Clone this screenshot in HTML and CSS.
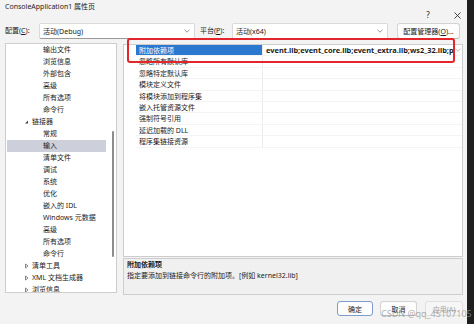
FILE: index.html
```html
<!DOCTYPE html>
<html lang="zh-CN">
<head>
    <meta charset="UTF-8">
    <title>ConsoleApplication1 属性页</title>
    <link rel="stylesheet" href="styles.css">
</head>
<body>
    <div class="dialog">
        <!-- title bar -->
        <div class="titlebar">
            <span class="title">ConsoleApplication1 属性页</span>
            <span class="tb-btn">?</span>
            <span class="tb-btn close">
                <svg width="7" height="7" viewBox="0 0 7 7"><path d="M0.5 0.5L6.5 6.5M6.5 0.5L0.5 6.5" stroke="#333" stroke-width="0.9"/></svg>
            </span>
        </div>

        <!-- configuration row -->
        <div class="toolbar">
            <span class="lbl">配置(<u>C</u>):</span>
            <div class="combo">
                <span>活动(Debug)</span>
                <svg class="chev" width="6" height="4" viewBox="0 0 6 4"><path d="M0.5 0.8L3 3.2L5.5 0.8" fill="none" stroke="#777" stroke-width="0.8"/></svg>
            </div>
            <span class="lbl plat">平台(<u>P</u>):</span>
            <div class="combo">
                <span>活动(x64)</span>
                <svg class="chev" width="6" height="4" viewBox="0 0 6 4"><path d="M0.5 0.8L3 3.2L5.5 0.8" fill="none" stroke="#777" stroke-width="0.8"/></svg>
            </div>
            <button class="btn mgr">配置管理器(<u>O</u>)...</button>
        </div>

        <div class="main">
            <!-- category tree -->
            <div class="tree">
                <div class="node l2">输出文件</div>
                <div class="node l2">浏览信息</div>
                <div class="node l2">外部包含</div>
                <div class="node l2">高级</div>
                <div class="node l2">所有选项</div>
                <div class="node l2">命令行</div>
                <div class="node l1">
                    <svg class="arrow" width="8" height="6" viewBox="0 0 8 6"><path d="M4 1.5L4 4.5L1 4.5Z" fill="#444"/></svg>链接器
                </div>
                <div class="node l2">常规</div>
                <div class="node l2 sel">输入</div>
                <div class="node l2">清单文件</div>
                <div class="node l2">调试</div>
                <div class="node l2">系统</div>
                <div class="node l2">优化</div>
                <div class="node l2">嵌入的 IDL</div>
                <div class="node l2">Windows 元数据</div>
                <div class="node l2">高级</div>
                <div class="node l2">所有选项</div>
                <div class="node l2">命令行</div>
                <div class="node l1">
                    <svg class="arrow" width="8" height="6" viewBox="0 0 8 6"><path d="M1.5 1L4 3L1.5 5Z" fill="none" stroke="#555" stroke-width="0.7"/></svg>清单工具
                </div>
                <div class="node l1">
                    <svg class="arrow" width="8" height="6" viewBox="0 0 8 6"><path d="M1.5 1L4 3L1.5 5Z" fill="none" stroke="#555" stroke-width="0.7"/></svg>XML 文档生成器
                </div>
                <div class="node l1">
                    <svg class="arrow" width="8" height="6" viewBox="0 0 8 6"><path d="M1.5 1L4 3L1.5 5Z" fill="none" stroke="#555" stroke-width="0.7"/></svg>浏览信息
                </div>
                <div class="scroll-thumb"></div>
            </div>

            <div class="props">
                <!-- property grid -->
                <div class="grid">
                    <div class="row">
                        <div class="name sel">附加依赖项</div>
                        <div class="value bold">
                            <span class="val-text">event.lib;event_core.lib;event_extra.lib;ws2_32.lib;p</span>
                            <svg class="chev" width="6" height="4" viewBox="0 0 6 4"><path d="M0.5 0.8L3 3.2L5.5 0.8" fill="none" stroke="#aaa" stroke-width="0.8"/></svg>
                        </div>
                    </div>
                    <div class="row"><div class="name">忽略所有默认库</div><div class="value"></div></div>
                    <div class="row"><div class="name">忽略特定默认库</div><div class="value"></div></div>
                    <div class="row"><div class="name">模块定义文件</div><div class="value"></div></div>
                    <div class="row"><div class="name">将模块添加到程序集</div><div class="value"></div></div>
                    <div class="row"><div class="name">嵌入托管资源文件</div><div class="value"></div></div>
                    <div class="row"><div class="name">强制符号引用</div><div class="value"></div></div>
                    <div class="row"><div class="name">延迟加载的 DLL</div><div class="value"></div></div>
                    <div class="row"><div class="name">程序集链接资源</div><div class="value"></div></div>
                </div>

                <!-- description -->
                <div class="desc">
                    <div class="desc-title">附加依赖项</div>
                    <div>指定要添加到链接命令行的附加项。[例如 kernel32.lib]</div>
                </div>
            </div>
        </div>

        <div class="footer">
            <button class="btn ok">确定</button>
            <button class="btn cancel">取消</button>
            <button class="btn apply" disabled>应用(A)</button>
        </div>

        <!-- red highlight drawn over the screenshot -->
        <div class="annot"></div>
        <div class="watermark">CSDN @qq_45107105</div>
    </div>
</body>
</html>
```

FILE: styles.css
```css
* {
    box-sizing: border-box;
}
body {
    margin: 0;
    width: 474px;
    height: 324px;
    background: #1f1f1f;
    font-family: "Noto Sans", "Noto Sans CJK SC", sans-serif;
    font-size: 7px;
    color: #1b1b1b;
    overflow: hidden;
}
.dialog {
    position: relative;
    width: 467px;
    height: 324px;
    background: #f3f3f3;
    display: flex;
    flex-direction: column;
}

/* title bar */
.titlebar {
    display: flex;
    height: 22px;
}
.title {
    flex: 1;
    padding: 2px 0 0 5px;
    line-height: 10px;
}
.tb-btn {
    width: 20px;
    margin-top: 10px;
    line-height: 10px;
    height: 10px;
    text-align: center;
    font-size: 8px;
    display: flex;
    align-items: center;
    justify-content: center;
}
.tb-btn.close {
    margin-left: 9px;
}

/* configuration row */
.toolbar {
    display: flex;
    align-items: center;
    height: 16px;
    margin-top: 1px;
    padding-left: 5px;
}
.lbl {
    width: 34px;
    line-height: 16px;
}
.lbl.plat {
    width: 32px;
    margin-left: 5px;
}
.combo {
    width: 156px;
    height: 16px;
    background: #fff;
    border: 1px solid #dadada;
    border-bottom-color: #9a9a9a;
    border-radius: 2px;
    display: flex;
    align-items: center;
    justify-content: space-between;
    padding: 0 4px 0 3px;
}
.btn {
    font-family: inherit;
    font-size: 7px;
    color: #1b1b1b;
    background: #fdfdfd;
    border: 1px solid #d3d3d3;
    border-bottom-color: #b8b8b8;
    border-radius: 3px;
    padding: 0;
    height: 15px;
}
.btn.mgr {
    width: 63px;
    height: 16px;
    margin-left: 9px;
}

/* main area */
.main {
    display: flex;
    margin-top: 4px;
    height: 252px;
}
.tree {
    position: relative;
    margin-left: 5px;
    width: 112px;
    height: 250px;
    background: #fff;
    border: 1px solid #cdcdcd;
    overflow: hidden;
}
.node {
    height: 12px;
    line-height: 12px;
    margin: 0 10px 0 1px;
    white-space: nowrap;
    display: flex;
    align-items: center;
}
.node.l2 {
    padding-left: 36px;
}
.node.l1 {
    padding-left: 17px;
}
.node.sel {
    background: #cdd0db;
}
.arrow {
    width: 8px;
    flex: none;
}
.scroll-thumb {
    position: absolute;
    left: 106px;
    top: 87px;
    width: 2px;
    height: 126px;
    border-radius: 1px;
    background: #8c8c8c;
}

.props {
    margin-left: 6px;
    width: 340px;
    padding-top: 1px;
    display: flex;
    flex-direction: column;
}
.grid {
    height: 213px;
    background: #fff;
    border: 1px solid #cdcdcd;
    padding-left: 12px;
}
.row {
    display: flex;
    height: 11.4px;
    line-height: 11.4px;
}
.name {
    width: 127px;
    padding-left: 3px;
    border-right: 1px solid #ececec;
    border-bottom: 1px solid #f4f4f4;
    white-space: nowrap;
}
.name.sel {
    background: #2b78d0;
    color: #fff;
}
.value {
    flex: 1;
    display: flex;
    align-items: center;
    padding: 0 1px 0 3px;
    border-bottom: 1px solid #f4f4f4;
    overflow: hidden;
}
.value.bold {
    font-weight: bold;
    font-size: 7.4px;
}
.val-text {
    flex: 1;
    white-space: nowrap;
}
.value .chev {
    flex: none;
    margin-left: 1px;
}

.desc {
    margin-top: 1px;
    height: 37px;
    background: #f0f0f0;
    border: 1px solid #cdcdcd;
    padding: 0 3px;
    line-height: 11px;
}
.desc-title {
    font-weight: bold;
}

/* dialog buttons */
.footer {
    display: flex;
    justify-content: flex-end;
    padding: 6px 4px 0 0;
}
.btn.ok {
    width: 36px;
    border-color: #7d9ccc;
}
.btn.cancel {
    width: 37px;
    margin-left: 7px;
}
.btn.apply {
    width: 38px;
    margin-left: 8px;
    color: #a3a3a3;
    background: #f6f6f6;
    border-color: #e0e0e0;
}

.annot {
    position: absolute;
    left: 127px;
    top: 38px;
    width: 328px;
    height: 25px;
    border: 2px solid #e3262b;
    border-radius: 3px;
}
.watermark {
    position: absolute;
    left: 381px;
    top: 307px;
    font-size: 9px;
    color: rgba(150, 150, 150, 0.75);
    white-space: nowrap;
}
```
